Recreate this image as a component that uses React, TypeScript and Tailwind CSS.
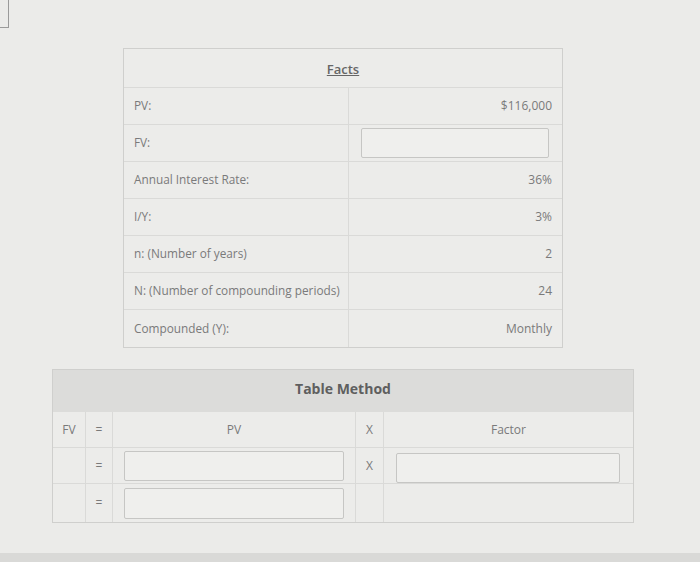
import React from 'react';

const font = { fontFamily: '"Open Sans", "Liberation Sans", sans-serif' };

const facts: { label: string; value?: string; input?: boolean }[] = [
  { label: 'PV:', value: '$116,000' },
  { label: 'FV:', input: true },
  { label: 'Annual Interest Rate:', value: '36%' },
  { label: 'I/Y:', value: '3%' },
  { label: 'n: (Number of years)', value: '2' },
  { label: 'N: (Number of compounding periods)', value: '24' },
  { label: 'Compounded (Y):', value: 'Monthly' },
];

const Box: React.FC<{ className?: string }> = ({ className }) => (
  <div className={`border border-[#c6c6c4] bg-[#efefed] rounded-[2px] ${className || ''}`} />
);

const App: React.FC = () => {
  return (
    <div style={font} className="w-[700px] h-[562px] bg-[#ebebe9] flex flex-col overflow-hidden text-[#7a7a7a]">
      <div className="w-[9px] h-[28px] border-r border-b border-[#9a9a9a]" />

      {/* Facts */}
      <div className="ml-[123px] mt-[20px] w-[440px] border border-[#cfcfcd] bg-[#ececea]">
        <div className="h-[39px] flex items-center justify-center border-b border-[#dadad8]">
          <span className="text-[13px] font-semibold underline text-[#666] mt-[3px]">Facts</span>
        </div>
        {facts.map((f, i) => (
          <div key={f.label} className={`grid grid-cols-[225px_1fr] h-[37px] ${i < facts.length - 1 ? 'border-b border-[#dadad8]' : ''}`}>
            <div className="border-r border-[#dadad8] flex items-center pl-[10px] text-[11.8px]">{f.label}</div>
            <div className="flex items-center justify-end pr-[10px] text-[12px]">
              {f.input ? <Box className="w-[188px] h-[30px] mr-[3px]" /> : f.value}
            </div>
          </div>
        ))}
      </div>

      {/* Table Method */}
      <div className="ml-[52px] mt-[21px] w-[582px] border border-[#cfcfcd] bg-[#ececea]">
        <div className="h-[42px] bg-[#dcdcda] flex items-center justify-center">
          <span className="text-[14px] font-bold text-[#5f5f5f] mb-[6px]">Table Method</span>
        </div>
        <div className="grid grid-cols-[33px_27px_243px_28px_1fr] text-[12px]">
          <div className="h-[36px] border-r border-b border-[#dadad8] flex items-center justify-center">FV</div>
          <div className="h-[36px] border-r border-b border-[#dadad8] flex items-center justify-center">=</div>
          <div className="h-[36px] border-r border-b border-[#dadad8] flex items-center justify-center">PV</div>
          <div className="h-[36px] border-r border-b border-[#dadad8] flex items-center justify-center">X</div>
          <div className="h-[36px] border-b border-[#dadad8] flex items-center justify-center">Factor</div>

          <div className="h-[36px] border-r border-b border-[#dadad8]" />
          <div className="h-[36px] border-r border-b border-[#dadad8] flex items-center justify-center">=</div>
          <div className="h-[36px] border-r border-b border-[#dadad8] flex items-center pl-[11px] pr-[11px]">
            <Box className="w-full h-[30px]" />
          </div>
          <div className="h-[36px] border-r border-b border-[#dadad8] flex items-center justify-center">X</div>
          <div className="h-[36px] border-b border-[#dadad8] flex items-center pl-[12px] pr-[13px]">
            <Box className="w-full h-[30px] mt-[4px]" />
          </div>

          <div className="h-[38px] border-r border-[#dadad8]" />
          <div className="h-[38px] border-r border-[#dadad8] flex items-center justify-center">=</div>
          <div className="h-[38px] border-r border-[#dadad8] flex items-center pl-[11px] pr-[11px]">
            <Box className="w-full h-[31px]" />
          </div>
          <div className="h-[38px] border-r border-[#dadad8]" />
          <div className="h-[38px]" />
        </div>
      </div>

      <div className="flex-1" />
      <div className="h-[9px] bg-[#d9d9d7]" />
    </div>
  );
};

export default App;
